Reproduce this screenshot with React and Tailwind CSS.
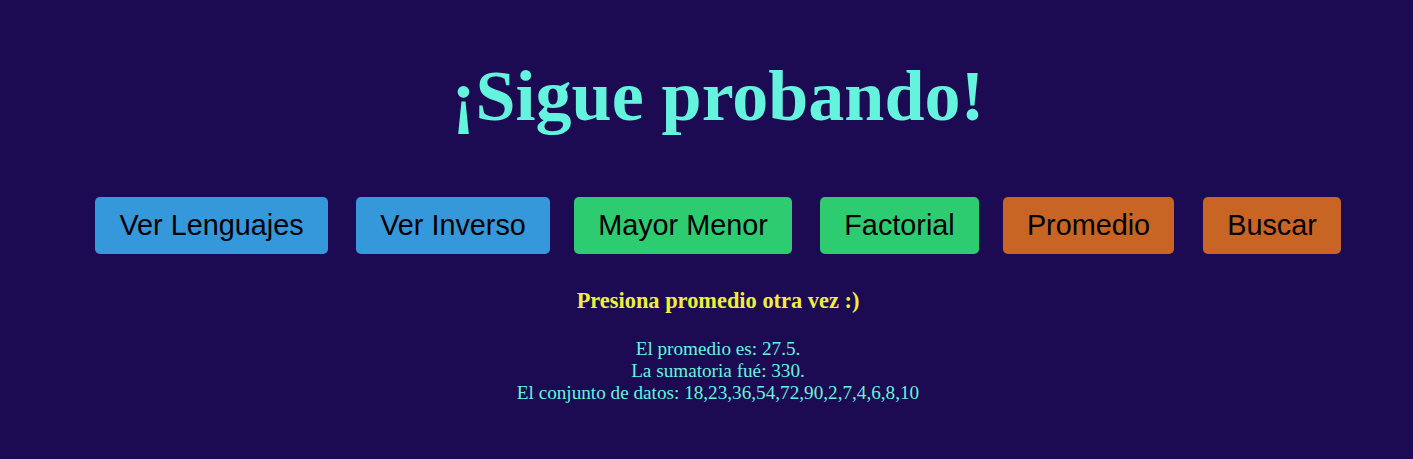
const buttons = [
  { label: 'Ver Lenguajes', w: 'w-[233px]', color: 'bg-[#3498db]', ml: 'ml-0' },
  { label: 'Ver Inverso', w: 'w-[194px]', color: 'bg-[#3498db]', ml: 'ml-[28px]' },
  { label: 'Mayor Menor', w: 'w-[218px]', color: 'bg-[#2ecc71]', ml: 'ml-[24px]' },
  { label: 'Factorial', w: 'w-[159px]', color: 'bg-[#2ecc71]', ml: 'ml-[28px]' },
  { label: 'Promedio', w: 'w-[171px]', color: 'bg-[#c86424]', ml: 'ml-[24px]' },
  { label: 'Buscar', w: 'w-[138px]', color: 'bg-[#c86424]', ml: 'ml-[29px]' },
]

export default function App() {
  return (
    <div className="min-h-screen w-full bg-[#1c0b52] pl-[23px] font-['Liberation_Serif',serif]">
      <div className="flex flex-col items-center">
        <h1 className="mt-[54px] text-[72px] font-bold leading-[84px] text-[#64f4de]">¡Sigue probando!</h1>

        <div className="mt-[59px] flex items-center">
          {buttons.map((b) => (
            <button
              key={b.label}
              type="button"
              className={`${b.w} ${b.color} ${b.ml} h-[57px] rounded-[5px] font-['Liberation_Sans',Arial,sans-serif] text-[28.8px] text-black`}
            >
              {b.label}
            </button>
          ))}
        </div>

        <p className="mt-[34px] text-[22.4px] font-bold leading-[26px] text-[#eef03c]">Presiona promedio otra vez :)</p>

        <div className="mt-[24px] text-center text-[19.2px] leading-[22px] text-[#64f4de]">
          <p>El promedio es: 27.5.</p>
          <p>La sumatoria fué: 330.</p>
          <p>El conjunto de datos: 18,23,36,54,72,90,2,7,4,6,8,10</p>
        </div>
      </div>
    </div>
  )
}
